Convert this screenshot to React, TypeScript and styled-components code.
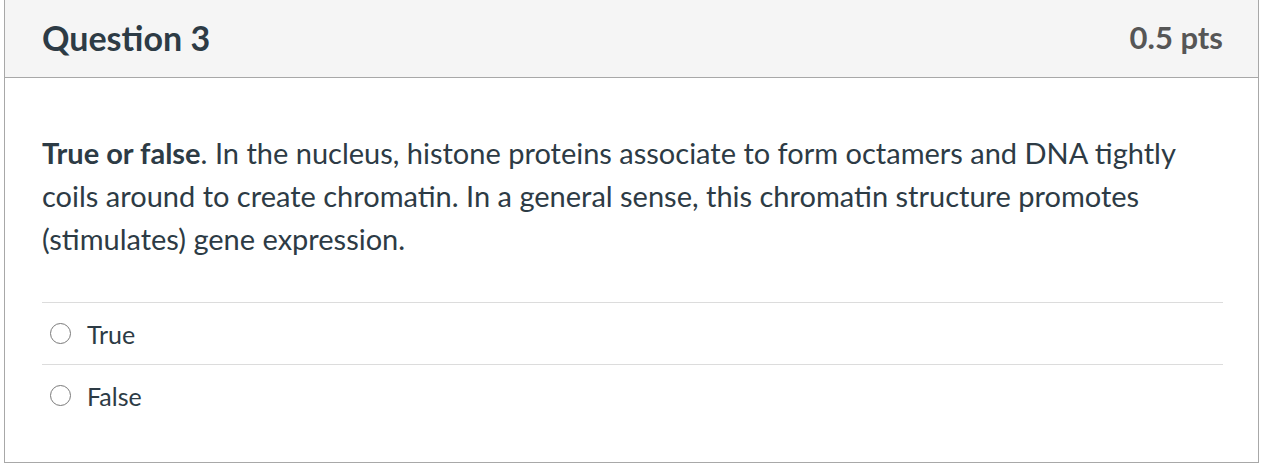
import styled, { createGlobalStyle } from "styled-components";

const GlobalStyle = createGlobalStyle`
    html, body {
        margin: 0;
        padding: 0;
        background: #ffffff;
    }
    body {
        font-family: Lato, "Noto Sans", sans-serif;
        color: #2d3b45;
    }
`;

const Page = styled.div`
    padding: 0 5px 2px 4px;
`;

const QuestionCard = styled.section`
    margin-top: -1px;
    border: 1px solid #a8a8a8;
    background: #ffffff;
`;

const QuestionHeader = styled.header`
    display: flex;
    align-items: center;
    justify-content: space-between;
    height: 78px;
    padding: 0 35px 3px 37px;
    background: #f5f5f5;
    border-bottom: 1px solid #a8a8a8;
    box-sizing: border-box;
`;

const QuestionName = styled.h2`
    margin: 0;
    font-size: 34px;
    font-weight: 700;
    color: #2d3b45;
`;

const Points = styled.span`
    font-size: 31px;
    font-weight: 700;
    color: #565656;
`;

const QuestionBody = styled.div`
    padding: 53px 35px 36px 37px;
`;

const QuestionText = styled.p`
    margin: 0 0 42px;
    font-size: 29px;
    line-height: 43px;
`;

const Answers = styled.div`
    display: flex;
    flex-direction: column;
`;

const AnswerRow = styled.label`
    display: flex;
    align-items: center;
    height: 62px;
    border-top: 1px solid #dcdcdc;
    box-sizing: border-box;
    padding-left: 8px;
    font-size: 25px;
    cursor: pointer;
`;

const RadioCircle = styled.span`
    width: 21px;
    height: 21px;
    border: 1.5px solid #7a7a7a;
    border-radius: 50%;
    box-sizing: border-box;
    margin-right: 16px;
    flex-shrink: 0;
`;

const answers = ["True", "False"];

export default function App() {
    return (
        <>
            <GlobalStyle />
            <Page>
                <QuestionCard>
                    <QuestionHeader>
                        <QuestionName>Question 3</QuestionName>
                        <Points>0.5 pts</Points>
                    </QuestionHeader>
                    <QuestionBody>
                        <QuestionText>
                            <strong>True or false</strong>. In the nucleus, histone proteins associate to form
                            octamers and DNA tightly coils around to create chromatin. In a general sense,
                            this chromatin structure promotes (stimulates) gene expression.
                        </QuestionText>
                        <Answers>
                            {answers.map((a) => (
                                <AnswerRow key={a}>
                                    <RadioCircle />
                                    {a}
                                </AnswerRow>
                            ))}
                        </Answers>
                    </QuestionBody>
                </QuestionCard>
            </Page>
        </>
    );
}
